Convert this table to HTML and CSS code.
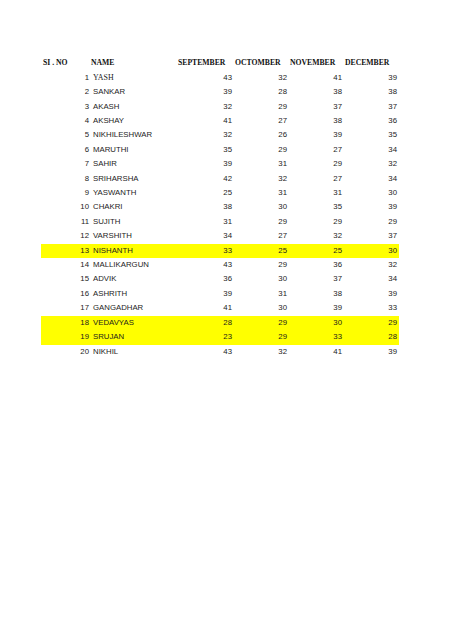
FILE: index.html
```html
<!DOCTYPE html>
<html>
<head>
<meta charset="utf-8">
<link rel="stylesheet" href="styles.css">
</head>
<body>
<div class="sheet">
  <div class="row head">
    <div class="h h1">SI . NO</div>
    <div class="h h2">NAME</div>
    <div class="h">SEPTEMBER</div>
    <div class="h">OCTOMBER</div>
    <div class="h">NOVEMBER</div>
    <div class="h">DECEMBER</div>
  </div>
  <div class="row"><div class="n">1</div><div class="nm serif">YASH</div><div class="v">43</div><div class="v">32</div><div class="v">41</div><div class="v">39</div></div>
  <div class="row"><div class="n">2</div><div class="nm">SANKAR</div><div class="v">39</div><div class="v">28</div><div class="v">38</div><div class="v">38</div></div>
  <div class="row"><div class="n">3</div><div class="nm">AKASH</div><div class="v">32</div><div class="v">29</div><div class="v">37</div><div class="v">37</div></div>
  <div class="row"><div class="n">4</div><div class="nm">AKSHAY</div><div class="v">41</div><div class="v">27</div><div class="v">38</div><div class="v">36</div></div>
  <div class="row"><div class="n">5</div><div class="nm">NIKHILESHWAR</div><div class="v">32</div><div class="v">26</div><div class="v">39</div><div class="v">35</div></div>
  <div class="row"><div class="n">6</div><div class="nm">MARUTHI</div><div class="v">35</div><div class="v">29</div><div class="v">27</div><div class="v">34</div></div>
  <div class="row"><div class="n">7</div><div class="nm">SAHIR</div><div class="v">39</div><div class="v">31</div><div class="v">29</div><div class="v">32</div></div>
  <div class="row"><div class="n">8</div><div class="nm">SRIHARSHA</div><div class="v">42</div><div class="v">32</div><div class="v">27</div><div class="v">34</div></div>
  <div class="row"><div class="n">9</div><div class="nm">YASWANTH</div><div class="v">25</div><div class="v">31</div><div class="v">31</div><div class="v">30</div></div>
  <div class="row"><div class="n">10</div><div class="nm">CHAKRI</div><div class="v">38</div><div class="v">30</div><div class="v">35</div><div class="v">39</div></div>
  <div class="row"><div class="n">11</div><div class="nm">SUJITH</div><div class="v">31</div><div class="v">29</div><div class="v">29</div><div class="v">29</div></div>
  <div class="row"><div class="n">12</div><div class="nm">VARSHITH</div><div class="v">34</div><div class="v">27</div><div class="v">32</div><div class="v">37</div></div>
  <div class="row hl"><div class="n">13</div><div class="nm">NISHANTH</div><div class="v">33</div><div class="v">25</div><div class="v">25</div><div class="v">30</div></div>
  <div class="row"><div class="n">14</div><div class="nm">MALLIKARGUN</div><div class="v">43</div><div class="v">29</div><div class="v">36</div><div class="v">32</div></div>
  <div class="row"><div class="n">15</div><div class="nm">ADVIK</div><div class="v">36</div><div class="v">30</div><div class="v">37</div><div class="v">34</div></div>
  <div class="row"><div class="n">16</div><div class="nm">ASHRITH</div><div class="v">39</div><div class="v">31</div><div class="v">38</div><div class="v">39</div></div>
  <div class="row"><div class="n">17</div><div class="nm">GANGADHAR</div><div class="v">41</div><div class="v">30</div><div class="v">39</div><div class="v">33</div></div>
  <div class="row hl"><div class="n">18</div><div class="nm">VEDAVYAS</div><div class="v">28</div><div class="v">29</div><div class="v">30</div><div class="v">29</div></div>
  <div class="row hl"><div class="n">19</div><div class="nm">SRUJAN</div><div class="v">23</div><div class="v">29</div><div class="v">33</div><div class="v">28</div></div>
  <div class="row"><div class="n">20</div><div class="nm">NIKHIL</div><div class="v">43</div><div class="v">32</div><div class="v">41</div><div class="v">39</div></div>
</div>
</body>
</html>
```
FILE: styles.css
```css
html, body {
  margin: 0;
  padding: 0;
  background: #ffffff;
}
.sheet {
  padding: 56px 0 0 41px;
  font-family: "Liberation Sans", Arial, sans-serif;
  font-size: 7.8px;
  color: #1c1c1c;
}
.row {
  display: grid;
  grid-template-columns: 50px 86px 57px 55px 55px 55px;
  width: 358px;
  height: 14.42px;
  line-height: 14.42px;
  white-space: nowrap;
}
.row.head {
  height: 14.8px;
  line-height: 14.8px;
}
.h {
  font-family: "Liberation Serif", "Times New Roman", serif;
  font-weight: bold;
  font-size: 7.7px;
  color: #111;
  padding-left: 1px;
}
.h1 { padding-left: 2px; }
.h2 { padding-left: 0; }
.n {
  text-align: right;
  padding-right: 2px;
}
.nm {
  padding-left: 2px;
}
.serif {
  font-family: "Liberation Serif", "Times New Roman", serif;
  font-size: 7.9px;
}
.v {
  text-align: right;
  padding-right: 2px;
}
.hl {
  background: #ffff00;
}
```
